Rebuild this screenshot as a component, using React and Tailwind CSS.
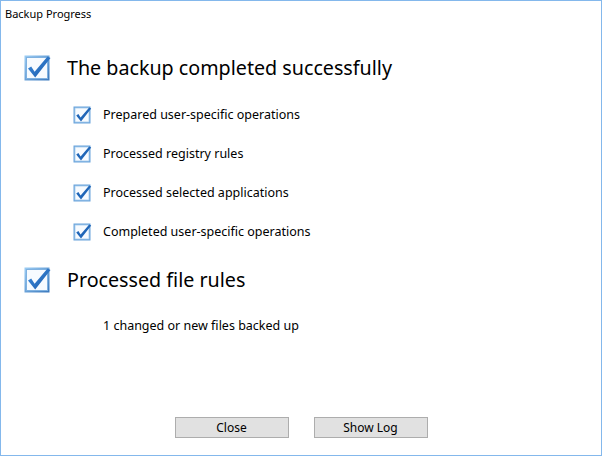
import React from 'react';

const BigCheck = ({ size = 26 }) => (
  <svg width={size} height={size} viewBox="0 0 26 26" className="shrink-0 overflow-visible">
    <defs>
      <linearGradient id="frame" x1="0" y1="0" x2="1" y2="1">
        <stop offset="0" stopColor="#9ccdf4" />
        <stop offset="1" stopColor="#3a78bd" />
      </linearGradient>
      <linearGradient id="tick" x1="0" y1="0" x2="1" y2="1">
        <stop offset="0" stopColor="#3f8ee0" />
        <stop offset="1" stopColor="#1b5aa8" />
      </linearGradient>
    </defs>
    <rect x="0.5" y="0.5" width="25" height="25" fill="url(#frame)" />
    <rect x="2.5" y="2.5" width="21" height="21" fill="#f7fbff" stroke="#7fb1e0" strokeWidth="1" />
    <path d="M4 13.5 L7.2 11.5 L10.6 16.8 L23.5 1.5 L26.5 3 L11.2 22.5 Z" fill="url(#tick)" />
  </svg>
);

const SmallCheck = () => (
  <svg width="18" height="18" viewBox="0 0 18 18" className="shrink-0 overflow-visible">
    <rect x="0.5" y="0.5" width="17" height="17" fill="#6aa4dc" />
    <rect x="2" y="2" width="14" height="14" fill="#f7fbff" stroke="#a6cbec" strokeWidth="0.8" />
    <path d="M3.2 9.4 L5.4 8 L7.6 11.6 L16.2 1.4 L18.2 2.4 L8 15.4 Z" fill="#2066b8" />
  </svg>
);

const steps = [
  'Prepared user-specific operations',
  'Processed registry rules',
  'Processed selected applications',
  'Completed user-specific operations',
];

export default function App() {
  return (
    <div
      className="w-[602px] h-[456px] bg-white border border-[#84b8ec] flex flex-col text-black overflow-hidden"
      style={{ fontFamily: '"Noto Sans", "Open Sans", sans-serif' }}
    >
      <div className="h-[24px] pl-[4px] pt-[5px] text-[11px] leading-[15px]">Backup Progress</div>

      <div className="mt-[30px] pl-[23px] flex items-center gap-[17px] h-[26px]">
        <BigCheck />
        <span className="text-[19.7px] leading-[26px]">The backup completed successfully</span>
      </div>

      <div className="mt-[25px] pl-[72px] flex flex-col gap-[21px]">
        {steps.map((s) => (
          <div key={s} className="flex items-center gap-[12px] h-[18px]">
            <SmallCheck />
            <span className="text-[12.5px] leading-[18px]">{s}</span>
          </div>
        ))}
      </div>

      <div className="mt-[26px] pl-[23px] flex items-center gap-[17px] h-[26px]">
        <BigCheck />
        <span className="text-[19.7px] leading-[26px]">Processed file rules</span>
      </div>

      <div className="mt-[25px] pl-[102px] text-[12.5px] leading-[16px]">1 changed or new files backed up</div>

      <div className="mt-auto pb-[17px] flex justify-center gap-[25px]">
        <button className="w-[114px] h-[21px] bg-[#e1e1e1] border border-[#adadad] text-[12px] leading-[19px]">
          Close
        </button>
        <button className="w-[114px] h-[21px] bg-[#e1e1e1] border border-[#adadad] text-[12px] leading-[19px]">
          Show Log
        </button>
      </div>
    </div>
  );
}
